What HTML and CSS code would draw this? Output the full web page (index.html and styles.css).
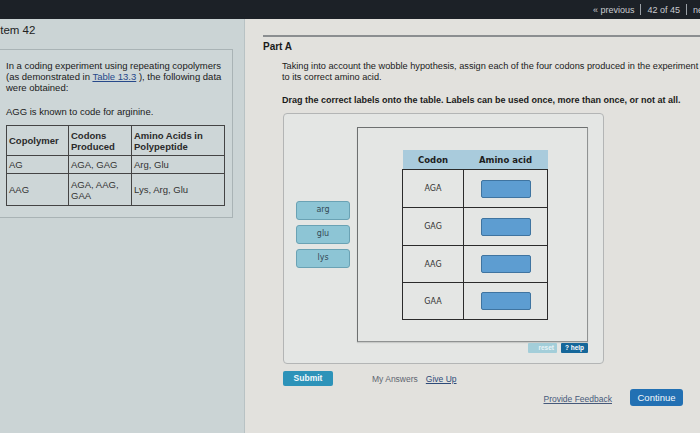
FILE: index.html
```html
<!DOCTYPE html>
<html>
<head>
<meta charset="utf-8">
<link rel="stylesheet" href="styles.css">
</head>
<body>
<div class="page">
  <div class="topbar">
    <span class="nav-link">« previous</span>
    <span class="sep"></span>
    <span class="nav-count">42 of 45</span>
    <span class="sep"></span>
    <span class="nav-link">next</span>
  </div>
  <div class="main">
    <aside class="left">
      <div class="item-title">Item 42</div>
      <div class="intro-box">
        <p class="intro">In a coding experiment using repeating copolymers (as demonstrated in <a class="tlink">Table 13.3</a> ), the following data were obtained:</p>
        <p class="intro note">AGG is known to code for arginine.</p>
        <table class="data">
          <tr class="head">
            <th class="c1">Copolymer</th>
            <th class="c2">Codons Produced</th>
            <th class="c3">Amino Acids in Polypeptide</th>
          </tr>
          <tr class="r1">
            <td>AG</td>
            <td>AGA, GAG</td>
            <td>Arg, Glu</td>
          </tr>
          <tr class="r2">
            <td>AAG</td>
            <td>AGA, AAG, GAA</td>
            <td>Lys, Arg, Glu</td>
          </tr>
        </table>
      </div>
    </aside>
    <section class="right">
      <div class="rule"></div>
      <h2 class="part-title">Part A</h2>
      <div class="content">
        <p class="question">Taking into account the wobble hypothesis, assign each of the four codons produced in the experiment to its correct amino acid.</p>
        <p class="instr">Drag the correct labels onto the table. Labels can be used once, more than once, or not at all.</p>
        <div class="drag-box">
          <div class="labels">
            <div class="label">arg</div>
            <div class="label">glu</div>
            <div class="label">lys</div>
          </div>
          <div class="target-col">
            <div class="target">
              <table class="codons">
                <tr class="chead"><th class="cc">Codon</th><th class="ca">Amino acid</th></tr>
                <tr class="crow r-a"><td>AGA</td><td><div class="drop"></div></td></tr>
                <tr class="crow r-b"><td>GAG</td><td><div class="drop"></div></td></tr>
                <tr class="crow r-c"><td>AAG</td><td><div class="drop"></div></td></tr>
                <tr class="crow r-d"><td>GAA</td><td><div class="drop"></div></td></tr>
              </table>
            </div>
            <div class="tools">
              <span class="btn-reset">reset</span>
              <span class="btn-help">? help</span>
            </div>
          </div>
        </div>
        <div class="submit-row">
          <span class="submit">Submit</span>
          <span class="my-answers">My Answers</span>
          <a class="give-up">Give Up</a>
        </div>
      </div>
      <div class="footer-row">
        <a class="feedback">Provide Feedback</a>
        <span class="continue">Continue</span>
      </div>
    </section>
  </div>
</div>
</body>
</html>
```
FILE: styles.css
```css
html, body {
  margin: 0;
  padding: 0;
}
body {
  width: 700px;
  height: 433px;
  overflow: hidden;
  background: #e2e1dd;
  font-family: "Liberation Sans", Arial, sans-serif;
  color: #1e1e1e;
}
.page {
  width: 700px;
  height: 433px;
  display: flex;
  flex-direction: column;
  overflow: hidden;
}
.topbar {
  height: 19px;
  flex: none;
  background: #1c2127;
  display: flex;
  align-items: center;
  justify-content: flex-end;
  gap: 6px;
  margin-right: -10px;
  font-size: 9px;
  color: #c9ccd0;
}
.sep {
  width: 1px;
  height: 11px;
  background: #9aa0a6;
}
.main {
  flex: 1;
  display: flex;
  min-height: 0;
}
.left {
  width: 245px;
  flex: none;
  background: #cbd4d5;
  border-right: 1px solid #b8c2c4;
  box-sizing: border-box;
  padding: 4px 11px 0 0;
}
.item-title {
  font-size: 11.5px;
  line-height: 14px;
  margin-left: -3px;
  color: #222;
}
.intro-box {
  margin-top: 12px;
  margin-left: -1px;
  width: 234px;
  box-sizing: border-box;
  border: 1px solid #a9b3b5;
  padding: 10px 4px 11px 6px;
  background: #cdd6d7;
}
.intro {
  margin: 0;
  font-size: 9.5px;
  line-height: 11px;
  color: #1a1a1a;
}
.note {
  margin-top: 13px;
}
.tlink {
  color: #27498a;
  text-decoration: underline;
}
.data {
  margin-top: 8px;
  width: 219px;
  border-collapse: collapse;
  font-size: 9.5px;
  line-height: 11px;
}
.data th, .data td {
  border: 1px solid #444;
  text-align: left;
  padding: 1px 2px;
  vertical-align: middle;
}
.data th {
  font-weight: bold;
  color: #2a2a2a;
  height: 27px;
}
.data .c1 { width: 57px; }
.data .c2 { width: 58px; }
.data td { color: #333; }
.r1 td { height: 15px; }
.r2 td { height: 29px; }

.right {
  flex: 1;
  min-width: 0;
  padding: 16px 0 0 18px;
  display: flex;
  flex-direction: column;
}
.rule {
  height: 2px;
  background: #8b8e90;
}
.part-title {
  margin: 4px 0 0 0;
  font-size: 10px;
  line-height: 12px;
  font-weight: bold;
  color: #1a1a1a;
}
.content {
  padding-left: 19px;
  margin-top: 8px;
}
.question {
  margin: 0;
  width: 420px;
  font-size: 9.2px;
  line-height: 11px;
  color: #1a1a1a;
}
.instr {
  margin: 12px 0 0 0;
  font-size: 9px;
  line-height: 11px;
  font-weight: bold;
  color: #1a1a1a;
  white-space: nowrap;
}
.drag-box {
  margin: 7px 0 0 1px;
  width: 321px;
  height: 251px;
  box-sizing: border-box;
  border: 1px solid #b3b5b5;
  border-radius: 4px;
  background: #e4e6e4;
  padding: 13px 0 0 12px;
  display: flex;
  gap: 7px;
}
.labels {
  width: 54px;
  height: 215px;
  display: flex;
  flex-direction: column;
  justify-content: center;
  gap: 5px;
}
.label {
  height: 19px;
  box-sizing: border-box;
  border: 1px solid #6aa2b4;
  border-radius: 3px;
  background: #8dc5d5;
  font-family: "DejaVu Sans", Verdana, sans-serif;
  font-size: 8px;
  line-height: 16px;
  text-align: center;
  color: #354a55;
}
.target-col {
  width: 231px;
  display: flex;
  flex-direction: column;
}
.target {
  height: 215px;
  box-sizing: border-box;
  border: 1px solid #8f9292;
  border-left-color: #6d7070;
  border-top-color: #6d7070;
  box-shadow: 0 1px 1px rgba(0,0,0,0.12);
  padding: 22px 0 0 44px;
}
.codons {
  border-collapse: collapse;
  width: 146px;
  font-family: "DejaVu Sans", Verdana, sans-serif;
}
.chead th {
  background: #a9cbdc;
  height: 19px;
  padding: 0;
  font-size: 8.5px;
  font-weight: bold;
  color: #1d1d1d;
}
.cc { width: 61px; }
.crow td {
  border: 1px solid #2b2b2b;
  padding: 0;
  text-align: center;
  font-size: 8px;
  color: #333;
}
.r-a td, .r-b td { height: 37px; }
.r-c td, .r-d td { height: 36px; }
.drop {
  width: 50px;
  height: 18px;
  margin: 0 auto;
  box-sizing: border-box;
  border: 1px solid #3f74a0;
  border-radius: 2px;
  background: #5d9dd1;
}
.tools {
  display: flex;
  justify-content: flex-end;
  gap: 4px;
  margin-top: 1px;
}
.btn-reset, .btn-help {
  height: 10px;
  font-size: 6.5px;
  line-height: 10px;
  font-weight: bold;
  border-radius: 1px;
  white-space: nowrap;
  box-sizing: border-box;
}
.btn-reset {
  background: #a3ced9;
  color: #e9f4f7;
  width: 29px;
  padding-right: 3px;
  text-align: right;
}
.btn-help {
  background: #15679a;
  color: #fff;
  width: 27px;
  text-align: center;
}
.submit-row {
  margin-top: 7px;
  display: flex;
  align-items: center;
}
.submit {
  width: 50px;
  height: 15px;
  margin-left: 1px;
  background: #2d93b9;
  border-radius: 2px;
  font-size: 8.5px;
  line-height: 15px;
  font-weight: bold;
  text-align: center;
  color: #f2f8fb;
}
.my-answers {
  margin-left: 39px;
  font-size: 8.5px;
  color: #5f6570;
}
.give-up {
  margin-left: 8px;
  font-size: 8.5px;
  color: #2d4a78;
  text-decoration: underline;
}
.footer-row {
  margin-top: 3px;
  display: flex;
  justify-content: flex-end;
  align-items: center;
  padding-right: 17px;
}
.feedback {
  font-size: 8.5px;
  color: #46597a;
  text-decoration: underline;
  margin-right: 18px;
  margin-top: 3px;
}
.continue {
  width: 53px;
  height: 17px;
  background: #2270b3;
  border-radius: 3px;
  font-size: 9.5px;
  line-height: 17px;
  text-align: center;
  color: #f3f7fb;
}
```
